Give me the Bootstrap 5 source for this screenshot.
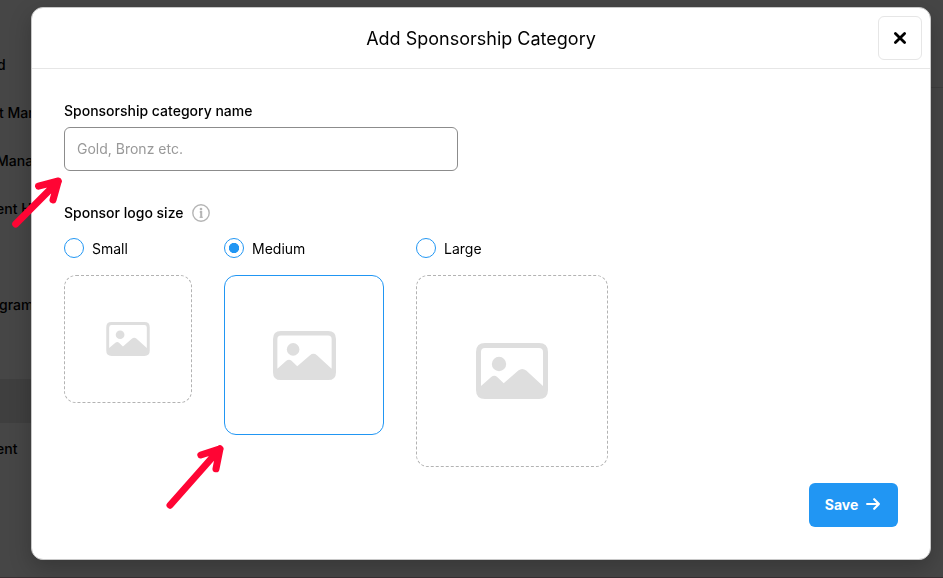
<!DOCTYPE html>
<html lang="en">
<head>
<meta charset="utf-8">
<meta name="viewport" content="width=device-width, initial-scale=1">
<title>Add Sponsorship Category</title>
<link href="https://cdn.jsdelivr.net/npm/bootstrap@5.3.0/dist/css/bootstrap.min.css" rel="stylesheet">
<style>
  body { font-family: Inter, "Liberation Sans", sans-serif; font-size: 14px; line-height: 20px; color: #000; background: #464646; height: 578px; overflow: hidden; }
  .side-nav { width: 31px; padding-top: 43px; font-weight: 500; }
  .side-nav .nav-link { height: 44px; margin-bottom: 4px; padding: 12px 0; color: #000; white-space: nowrap; overflow: hidden; }
  .side-nav .nav-link.active { background: #3f3f3f; }
  .side-nav .shift-1 { text-indent: -1px; }
  .side-nav .shift-3 { text-indent: -3px; }
  .side-nav .shift-4 { text-indent: -4px; }
  .page-rule { height: 88px; width: 12px; border-bottom: 1px solid #3e3e3e; }
  .page-foot { height: 1px; background: #382f32; }
  .sponsor-modal { padding: 7px 12px 18px 31px; }
  .sponsor-modal .modal-content { height: 553px; border: 1px solid #c8c8c8; border-radius: 12px; background: #fff; box-shadow: 0 8px 22px rgba(0,0,0,.22); color: #000; }
  .sponsor-modal .modal-header { height: 61px; padding: 0 8px; border-bottom: 1px solid #e6e6e6; }
  .sponsor-modal .modal-title { font-size: 18px; line-height: 24px; font-weight: 400; padding-top: 2px; }
  .head-side { width: 44px; height: 44px; }
  .close-btn { border: 1px solid #e6e6e6; border-radius: 6px; background: #fff; }
  .sponsor-modal .modal-body { padding: 32px 32px 0; }
  .field-label { font-weight: 500; line-height: 20px; }
  .name-input { width: 394px; height: 44px; margin-top: 6px; padding: 0 12px 2px; font-size: 14px; border: 1px solid #8c8c8c; border-radius: 6px; }
  .name-input::placeholder { color: #999; }
  .size-heading { margin-top: 32px; gap: 9px; }
  .size-list { margin-top: 15px; gap: 32px; }
  .size-option label { height: 20px; }
  .size-option label span { padding-top: 2px; }
  .size-option .form-check-input { width: 20px; height: 20px; margin: 0; border: 1px solid #2196f3; background: #fff; box-shadow: none; }
  .size-option .form-check-input:checked { background: radial-gradient(circle, #2196f3 4.8px, #fff 5.4px); }
  .logo-box { margin-top: 17px; border: 1px dashed #b3b3b3; border-radius: 12px; }
  .logo-box.chosen { border: 1px solid #2196f3; }
  .logo-sm { width: 128px; height: 128px; }
  .logo-md { width: 160px; height: 160px; }
  .logo-lg { width: 192px; height: 192px; }
  .save-btn { width: 89px; height: 44px; padding: 0 2px 2px 0; font-size: 14px; font-weight: 700; border: 0; border-radius: 6px; background: #2196f3; }
  .sponsor-modal .modal-footer { padding: 0 32px 32px; border: 0; }
  .sponsor-modal .modal-footer > * { margin: 0; }
  .pointer-layer { z-index: 1100; pointer-events: none; }
</style>
<script src="https://cdn.jsdelivr.net/npm/bootstrap@5.3.0/dist/js/bootstrap.bundle.min.js"></script>
</head>
<body>
<svg class="d-none">
  <symbol id="picture" viewBox="0 0 72 56">
    <path fill="#dedede" fill-rule="evenodd" d="M9 0H63Q72 0 72 9V47Q72 56 63 56H9Q0 56 0 47V9Q0 0 9 0ZM9 5Q5 5 5 9V43L15.2 34Q18.3 31.6 21.2 34L27.7 40.3L42.3 27.6Q46.2 24.6 50.2 27.6L67 43V9Q67 5 63 5Z"/>
    <circle cx="23" cy="21" r="7.2" fill="#dedede"/>
  </symbol>
</svg>

<div class="d-flex flex-column vh-100">
  <div class="d-flex justify-content-between flex-grow-1">
    <nav class="nav flex-column flex-nowrap side-nav">
      <a class="nav-link shift-3">d</a>
      <a class="nav-link shift-1">t Mar</a>
      <a class="nav-link shift-4">Mana</a>
      <a class="nav-link shift-4">ent H</a>
      <a class="nav-link"></a>
      <a class="nav-link shift-1">gram</a>
      <a class="nav-link"></a>
      <a class="nav-link active"></a>
      <a class="nav-link shift-4">ent</a>
    </nav>
    <div class="page-rule"></div>
  </div>
  <div class="page-foot"></div>
</div>

<div class="modal d-block sponsor-modal overflow-hidden" role="dialog" aria-labelledby="dialog-title">
  <div class="modal-content">
    <div class="modal-header d-flex align-items-center justify-content-between">
      <span class="head-side"></span>
      <h1 class="modal-title" id="dialog-title">Add Sponsorship Category</h1>
      <button type="button" class="head-side close-btn d-flex align-items-center justify-content-center p-0" aria-label="Close">
        <svg width="14" height="14" viewBox="0 0 14 14" fill="none" stroke="#000" stroke-width="2.8" stroke-linecap="round"><path d="M2.4 2.4 11.6 11.6M11.6 2.4 2.4 11.6"/></svg>
      </button>
    </div>
    <div class="modal-body">
      <label class="field-label d-block" for="category-name">Sponsorship category name</label>
      <input id="category-name" class="form-control name-input" type="text" placeholder="Gold, Bronz etc.">
      <div class="size-heading d-flex align-items-center">
        <span class="field-label">Sponsor logo size</span>
        <svg width="18" height="18" viewBox="0 0 18 18" fill="none" stroke="#b5b5b5"><circle cx="9" cy="9" r="8.2" stroke-width="1.4"/><circle cx="9" cy="5.1" r="1.3" fill="#b5b5b5" stroke="none"/><path d="M7.8 8.1H9.2V13.4" stroke-width="2"/><path d="M7.6 13.3H10.8" stroke-width="1.2"/></svg>
      </div>
      <div class="size-list d-flex align-items-start">
        <div class="size-option">
          <label class="d-flex align-items-center gap-2"><input class="form-check-input" type="radio" name="size"><span>Small</span></label>
          <div class="logo-box logo-sm d-flex align-items-center justify-content-center"><svg width="44" height="34" viewBox="0 0 72 56"><use href="#picture" width="72" height="56"/></svg></div>
        </div>
        <div class="size-option">
          <label class="d-flex align-items-center gap-2"><input class="form-check-input" type="radio" name="size" checked><span>Medium</span></label>
          <div class="logo-box chosen logo-md d-flex align-items-center justify-content-center"><svg width="63" height="49" viewBox="0 0 72 56"><use href="#picture" width="72" height="56"/></svg></div>
        </div>
        <div class="size-option">
          <label class="d-flex align-items-center gap-2"><input class="form-check-input" type="radio" name="size"><span>Large</span></label>
          <div class="logo-box logo-lg d-flex align-items-center justify-content-center"><svg width="72" height="56"><use href="#picture" width="72" height="56"/></svg></div>
        </div>
      </div>
    </div>
    <div class="modal-footer">
      <button type="button" class="btn btn-primary save-btn d-flex align-items-center justify-content-center gap-2">Save
        <svg width="14" height="12" viewBox="0 0 14 12" fill="none" stroke="#fff" stroke-width="2.2" stroke-linecap="round" stroke-linejoin="round"><path d="M1.1 6H12.9M8.2 1.2 12.9 6 8.2 10.8"/></svg>
      </button>
    </div>
  </div>
</div>

<svg class="pointer-layer position-fixed top-0 start-0" width="943" height="578" fill="none" stroke="#ff0534" stroke-width="7" stroke-linecap="round" stroke-linejoin="round">
  <path d="M15.7 224 58.3 181.2M38.5 186.2 58.3 181 53 200"/>
  <path d="M170 505.2 220 448.8M200.8 455 220 448.8 216 468.8"/>
</svg>
</body>
</html>
